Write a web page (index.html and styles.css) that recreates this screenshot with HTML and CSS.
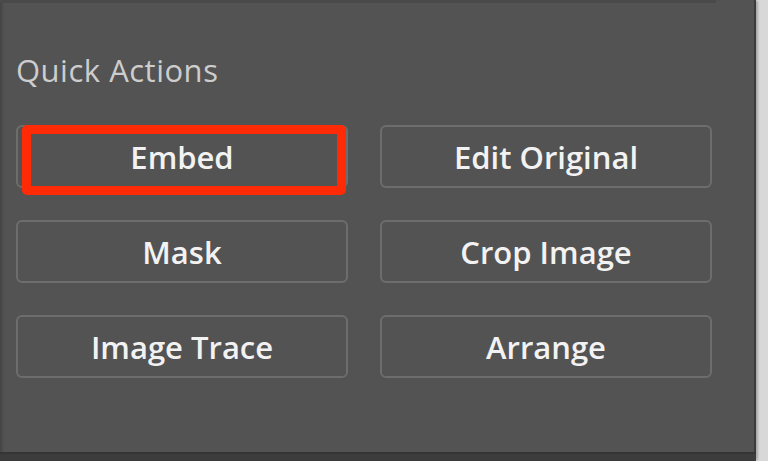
FILE: index.html
```html
<!DOCTYPE html>
<html>
<head>
<meta charset="utf-8">
<link rel="stylesheet" href="styles.css">
</head>
<body>
<div class="window">
  <div class="panel">
    <div class="topband"></div>
    <h2 class="heading">Quick Actions</h2>
    <div class="actions">
      <button class="action highlighted">Embed<span class="callout"></span></button>
      <button class="action">Edit Original</button>
      <button class="action">Mask</button>
      <button class="action">Crop Image</button>
      <button class="action">Image Trace</button>
      <button class="action">Arrange</button>
    </div>
  </div>
  <div class="footer"></div>
</div>
</body>
</html>
```
FILE: styles.css
```css
html, body {
  margin: 0;
  padding: 0;
}
body {
  width: 768px;
  height: 461px;
  overflow: hidden;
  background: #d8d8d8;
  font-family: "Open Sans", "Liberation Sans", sans-serif;
}
.window {
  width: 756px;
  height: 461px;
  display: flex;
  flex-direction: column;
  box-shadow: 3px 0 2px -1px #a8a8a8;
}
.panel {
  height: 452px;
  box-sizing: border-box;
  background: #535353;
  border-right: 2px solid #3b3b3b;
  box-shadow: inset 4px 0 3px -2px #444444;
  display: flex;
  flex-direction: column;
}
.topband {
  width: 716px;
  height: 3px;
  background: #4a4a4a;
}
.heading {
  margin: 52px 0 0 16px;
  font-size: 31px;
  line-height: 31px;
  font-weight: 400;
  letter-spacing: 0.5px;
  color: #cdcdcd;
}
.actions {
  margin: 39px 0 0 16px;
  display: grid;
  grid-template-columns: 332px 332px;
  grid-auto-rows: 63px;
  column-gap: 32px;
  row-gap: 32px;
}
.action {
  position: relative;
  display: flex;
  align-items: center;
  justify-content: center;
  margin: 0;
  padding: 0;
  background: #535353;
  border: 2px solid #6d6d6d;
  border-radius: 6px;
  font-family: "Open Sans", "Liberation Sans", sans-serif;
  font-size: 31px;
  font-weight: 600;
  color: #f2f2f2;
}
.callout {
  position: absolute;
  left: 4px;
  top: -2px;
  width: 324px;
  height: 70px;
  box-sizing: border-box;
  border: 9px solid #ff2a06;
  border-radius: 5px;
}
.footer {
  height: 9px;
  background: #3c3c3c;
  border-top: 2px solid #353535;
  box-sizing: border-box;
}
```
